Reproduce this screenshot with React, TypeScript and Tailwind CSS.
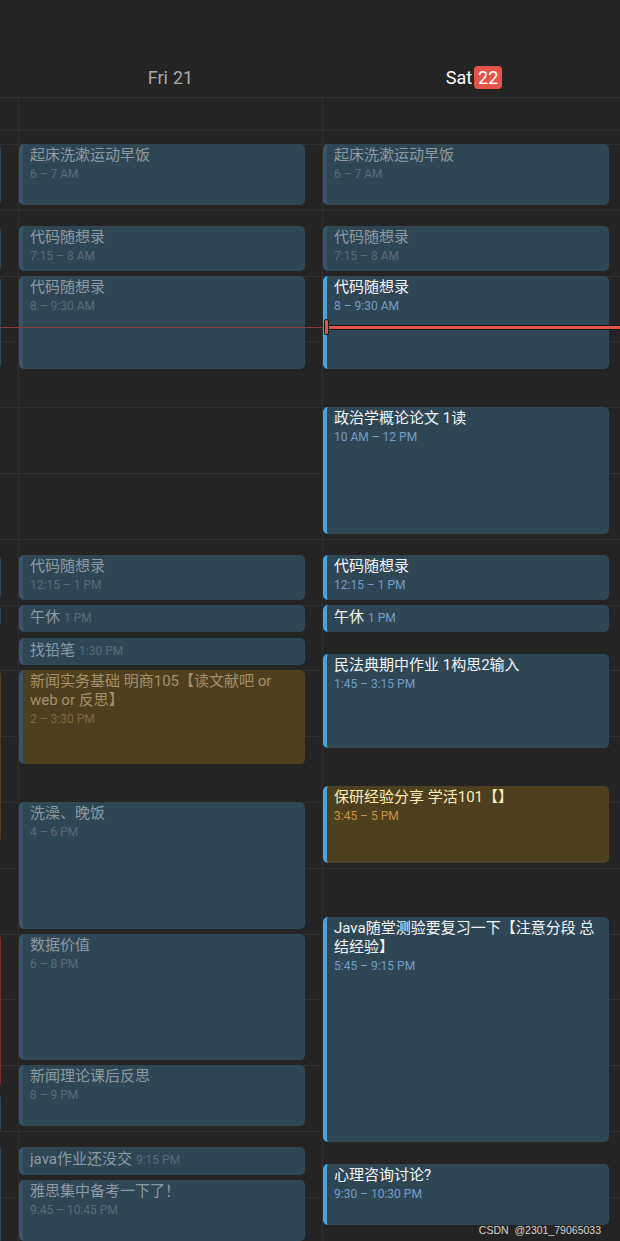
import React from 'react';

type Tone = 'past' | 'pastOrange' | 'now' | 'nowOrange' | 'red';

type CalEvent = {
  title: string;
  time: string;
  start: number;
  end: number;
  tone: Tone;
};

const HOUR = 65.8;
const OFFSET = 13;

const toneClasses: Record<Tone, { box: string; title: string; time: string }> = {
  past: { box: 'bg-[#2f4655] border-[#36546c]', title: 'text-[#8c9aa3]', time: 'text-[#586d7c]' },
  pastOrange: { box: 'bg-[#4e3f1e] border-[#36546c]', title: 'text-[#a59069]', time: 'text-[#7d6942]' },
  now: { box: 'bg-[#2f4655] border-[#4ba2dc]', title: 'text-[#f3f7f9]', time: 'text-[#6f9fcb]' },
  nowOrange: { box: 'bg-[#4e3f1e] border-[#4ba2dc]', title: 'text-[#fbefb9]', time: 'text-[#c9953f]' },
  red: { box: 'bg-[#7a2a2a] border-[#b33b3b]', title: 'text-[#d9a0a0]', time: 'text-[#a06060]' },
};

const thursday: CalEvent[] = [
  { title: '', time: '', start: 6, end: 7, tone: 'past' },
  { title: '', time: '', start: 7.25, end: 8, tone: 'past' },
  { title: '', time: '', start: 8, end: 9.5, tone: 'past' },
  { title: '', time: '', start: 12.25, end: 13, tone: 'past' },
  { title: '', time: '', start: 13, end: 13.42, tone: 'past' },
  { title: '', time: '', start: 14, end: 16.7, tone: 'pastOrange' },
  { title: '', time: '', start: 18, end: 20.4, tone: 'red' },
  { title: '', time: '', start: 20.42, end: 21.1, tone: 'past' },
  { title: '', time: '', start: 21.2, end: 22.8, tone: 'past' },
];

const friday: CalEvent[] = [
  { title: '起床洗漱运动早饭', time: '6 – 7 AM', start: 6, end: 7, tone: 'past' },
  { title: '代码随想录', time: '7:15 – 8 AM', start: 7.25, end: 8, tone: 'past' },
  { title: '代码随想录', time: '8 – 9:30 AM', start: 8, end: 9.5, tone: 'past' },
  { title: '代码随想录', time: '12:15 – 1 PM', start: 12.25, end: 13, tone: 'past' },
  { title: '午休', time: '1 PM', start: 13, end: 13.5, tone: 'past' },
  { title: '找铅笔', time: '1:30 PM', start: 13.5, end: 14, tone: 'past' },
  { title: '新闻实务基础 明商105【读文献吧 or web or 反思】', time: '2 – 3:30 PM', start: 14, end: 15.5, tone: 'pastOrange' },
  { title: '洗澡、晚饭', time: '4 – 6 PM', start: 16, end: 18, tone: 'past' },
  { title: '数据价值', time: '6 – 8 PM', start: 18, end: 20, tone: 'past' },
  { title: '新闻理论课后反思', time: '8 – 9 PM', start: 20, end: 21, tone: 'past' },
  { title: 'java作业还没交', time: '9:15 PM', start: 21.25, end: 21.75, tone: 'past' },
  { title: '雅思集中备考一下了！', time: '9:45 – 10:45 PM', start: 21.75, end: 22.75, tone: 'past' },
];

const saturday: CalEvent[] = [
  { title: '起床洗漱运动早饭', time: '6 – 7 AM', start: 6, end: 7, tone: 'past' },
  { title: '代码随想录', time: '7:15 – 8 AM', start: 7.25, end: 8, tone: 'past' },
  { title: '代码随想录', time: '8 – 9:30 AM', start: 8, end: 9.5, tone: 'now' },
  { title: '政治学概论论文 1读', time: '10 AM – 12 PM', start: 10, end: 12, tone: 'now' },
  { title: '代码随想录', time: '12:15 – 1 PM', start: 12.25, end: 13, tone: 'now' },
  { title: '午休', time: '1 PM', start: 13, end: 13.5, tone: 'now' },
  { title: '民法典期中作业 1构思2输入', time: '1:45 – 3:15 PM', start: 13.75, end: 15.25, tone: 'now' },
  { title: '保研经验分享 学活101【】', time: '3:45 – 5 PM', start: 15.75, end: 17, tone: 'nowOrange' },
  { title: 'Java随堂测验要复习一下【注意分段 总结经验】', time: '5:45 – 9:15 PM', start: 17.75, end: 21.25, tone: 'now' },
  { title: '心理咨询讨论?', time: '9:30 – 10:30 PM', start: 21.5, end: 22.5, tone: 'now' },
];

const EventBlock: React.FC<{ ev: CalEvent }> = ({ ev }) => {
  const t = toneClasses[ev.tone];
  const short = ev.end - ev.start <= 0.5;
  return (
    <div
      className={`absolute left-0 right-[17px] z-0 overflow-hidden rounded-[5px] border-l-4 pt-[2px] pl-[7px] pr-[5px] ${t.box}`}
      style={{ top: OFFSET + (ev.start - 6) * HOUR, height: (ev.end - ev.start) * HOUR - 5 }}
    >
      {short ? (
        <div className="truncate text-[15px] leading-[21px]">
          <span className={t.title}>{ev.title}</span>
          <span className={`ml-[4px] text-[12px] ${t.time}`}>{ev.time}</span>
        </div>
      ) : (
        <>
          <div className={`text-[15px] leading-[19px] ${t.title}`}>{ev.title}</div>
          <div className={`text-[12px] leading-[18px] ${t.time}`}>{ev.time}</div>
        </>
      )}
    </div>
  );
};

const DayColumn: React.FC<{ events: CalEvent[]; today?: boolean }> = ({ events, today }) => (
  <div className="relative w-[304px] shrink-0 border-l border-[#2f2f2f]">
    <div className="flex flex-col">
      <div className="h-[13px]" />
      {Array.from({ length: 17 }).map((_, i) => (
        <div key={i} className="h-[65.8px] shrink-0 border-t border-[#2f2f2f]" />
      ))}
    </div>
    {events.map((ev, i) => (
      <EventBlock key={i} ev={ev} />
    ))}
    {today ? (
      <>
        <div className="absolute left-px right-0 top-[194px] z-10 h-[5px] border-y border-[#151515] bg-[#e5534b]" />
        <div className="absolute left-px top-[188px] z-10 h-[16px] w-[5px] rounded-[2px] border border-[#151515] bg-[#e5534b]" />
      </>
    ) : (
      <div className="absolute -left-px right-0 top-[196px] z-10 h-px bg-[#8c3b3b]" />
    )}
  </div>
);

const App: React.FC = () => {
  return (
    <div className="relative h-[1241px] w-[620px] overflow-hidden bg-[#242424] font-['Roboto','Noto_Sans_CJK_SC',sans-serif]">
      <div className="ml-[-286px] flex h-[98px] border-b border-[#2f2f2f]">
        <div className="w-[304px] shrink-0" />
        <div className="flex w-[304px] shrink-0 items-end justify-center pb-[8px] pl-[4px] text-[18px] leading-[23px] text-[#ababab]">
          <span>Fri</span>
          <span className="ml-[2px] px-[3px]">21</span>
        </div>
        <div className="flex w-[304px] shrink-0 items-end justify-center pb-[8px] text-[18px] leading-[23px] text-white">
          <span>Sat</span>
          <span className="ml-[2px] rounded-[4px] bg-[#e5534b] px-[4px]">22</span>
        </div>
      </div>
      <div className="ml-[-286px] flex h-[33px] border-b border-[#2f2f2f]">
        <div className="w-[304px] shrink-0 border-l border-[#2f2f2f]" />
        <div className="w-[304px] shrink-0 border-l border-[#2f2f2f]" />
        <div className="w-[304px] shrink-0 border-l border-[#2f2f2f]" />
      </div>
      <div className="ml-[-286px] flex">
        <DayColumn events={thursday} />
        <DayColumn events={friday} />
        <DayColumn events={saturday} today />
      </div>
      <div className="absolute bottom-[4px] right-[19px] z-20 font-['Liberation_Sans',sans-serif] text-[10.5px] leading-[14px] text-[#d6d6d6]">
        CSDN&nbsp;&nbsp;@2301_79065033
      </div>
    </div>
  );
};

export default App;
